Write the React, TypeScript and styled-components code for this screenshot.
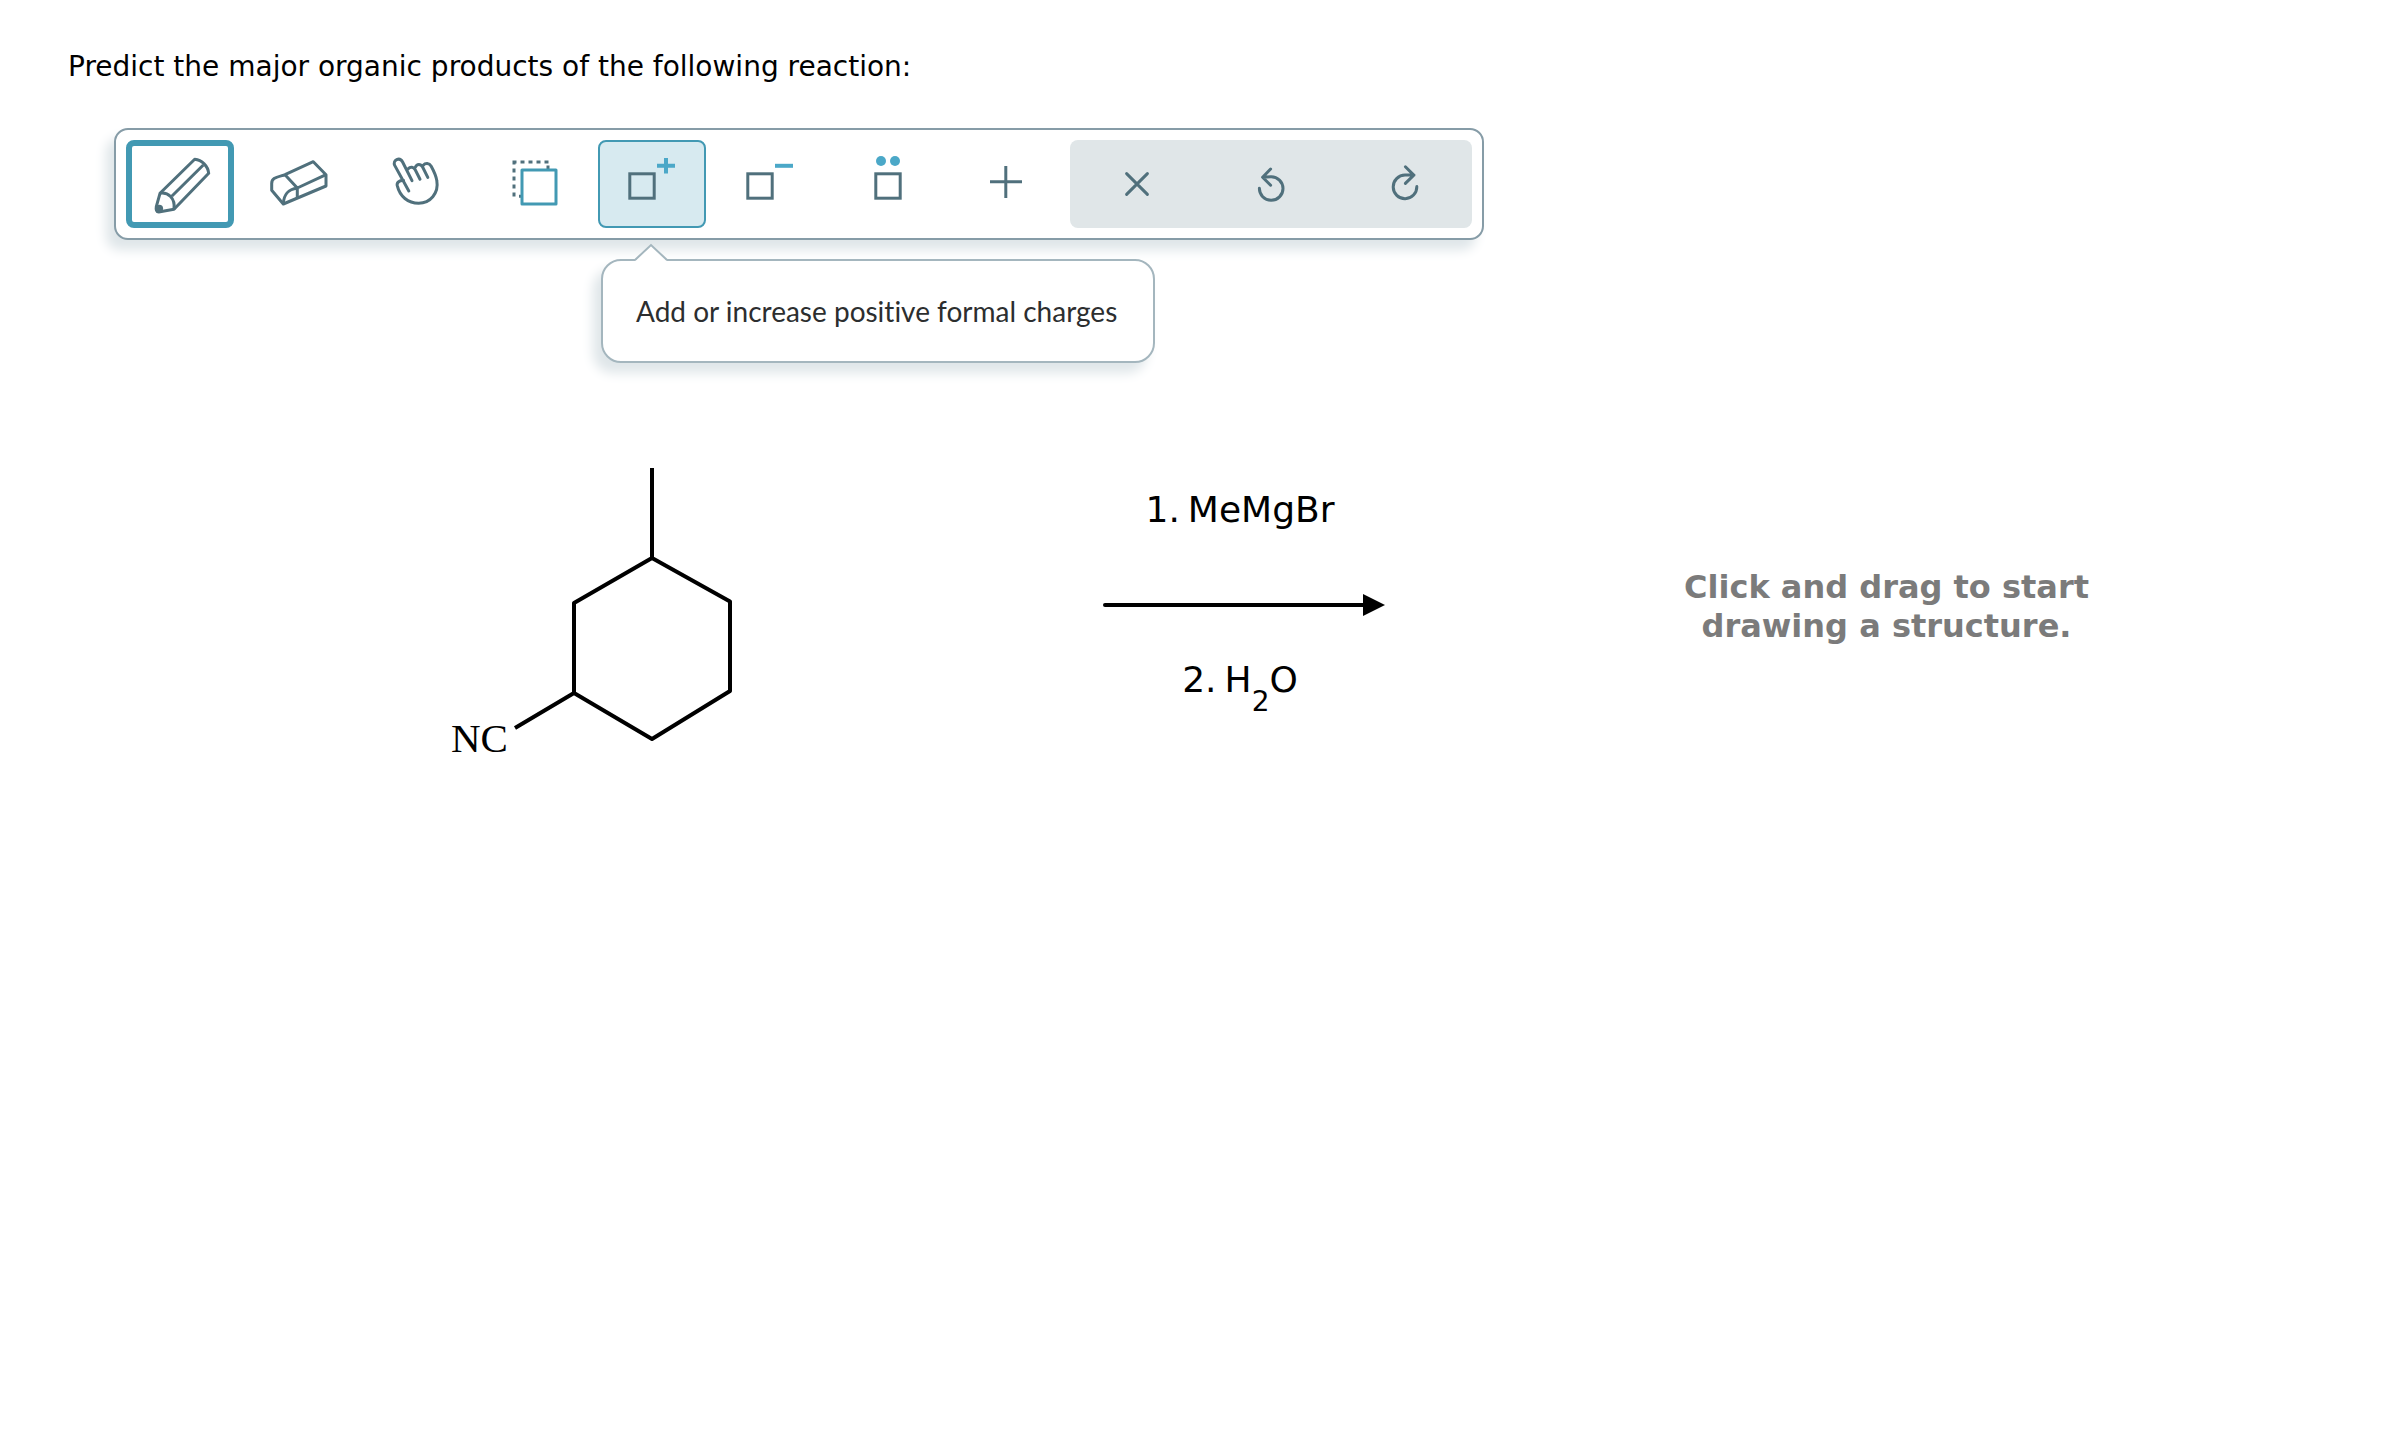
import React from "react";
import styled, { createGlobalStyle } from "styled-components";

const INK = "#50707c";
const TEAL = "#4299b3";
const SKY = "#4ba8c8";

const GlobalStyle = createGlobalStyle`
  *, *::before, *::after { box-sizing: border-box; }
  body {
    margin: 0;
    background: #fff;
    color: #000;
    font-family: Verdana, "DejaVu Sans", sans-serif;
  }
`;

const Page = styled.main`
  padding: 49px 0;
`;

const Prompt = styled.h1`
  margin: 0 68px 43px;
  font-size: 28px;
  line-height: 36px;
  font-weight: 400;
`;

const Toolbar = styled.div`
  display: flex;
  gap: 10px;
  width: fit-content;
  margin-left: 114px;
  padding: 10px;
  border: 2px solid #869ca7;
  border-radius: 14px;
  background: #fff;
  box-shadow: -8px 10px 12px #dfe6e9;
`;

const ToolSlot = styled.div`
  position: relative;
`;

type ToolState = "idle" | "selected" | "hovered";

const ToolButton = styled.button<{ $state: ToolState }>`
  display: flex;
  align-items: center;
  justify-content: center;
  width: 108px;
  height: 88px;
  padding: 0;
  border-radius: 8px;
  border: ${(p) =>
    p.$state === "selected"
      ? `6px solid ${TEAL}`
      : p.$state === "hovered"
        ? `2px solid ${TEAL}`
        : "0"};
  background: ${(p) => (p.$state === "hovered" ? "#d7eaf0" : "#fff")};
`;

const HistoryGroup = styled.div`
  display: flex;
  border-radius: 8px;
  background: #e0e6e8;
`;

const HistoryButton = styled.button`
  display: flex;
  align-items: center;
  justify-content: center;
  width: 134px;
  height: 88px;
  padding: 0;
  border: 0;
  background: transparent;
`;

const Icon = styled.svg`
  display: block;
  flex: none;
  width: 64px;
  height: 64px;
  fill: none;
  stroke: ${INK};
  stroke-width: 3;
  stroke-linejoin: round;
`;

const Tooltip = styled.div`
  position: absolute;
  z-index: 1;
  top: 119px;
  left: 3px;
  padding: 32px 36px 32px 33px;
  border: 2px solid #a4b6be;
  border-radius: 20px;
  background: #fff;
  box-shadow: -8px 10px 12px #dfe6e9;
  color: #2c2e2f;
  font-family: "Proxima Nova", Lato, sans-serif;
  font-size: 28px;
  font-variant-ligatures: none;
  line-height: 36px;
  white-space: nowrap;
`;

const TooltipArrow = styled.svg`
  position: absolute;
  top: -18px;
  left: 31px;
  width: 34px;
  height: 18px;
`;

const Reaction = styled.section`
  display: grid;
  grid-template-columns: 646fr 660fr 625fr;
  justify-items: center;
  align-items: start;
  margin: 228px 183px 0 268px;
`;

const Molecule = styled.svg`
  display: block;
  width: 280px;
  height: 290px;
  overflow: visible;
  fill: none;
  stroke: #000;
  stroke-width: 4;

  text {
    fill: #000;
    stroke: none;
    font-family: "Times New Roman", "Liberation Serif", serif;
    font-size: 41px;
  }
`;

const Conditions = styled.div`
  display: flex;
  flex-direction: column;
  align-items: center;
  padding-top: 20px;
  font-size: 36px;
  line-height: 44px;
`;

const Reagent = styled.div`
  display: flex;
  gap: 8px;
  padding-right: 8px;
`;

const Sub = styled.sub`
  font-size: 28px;
  line-height: 0;
  vertical-align: -19px;
`;

const Arrow = styled.svg`
  display: block;
  width: 282px;
  height: 24px;
  margin: 61px 0 41px;
`;

const DrawingHint = styled.p`
  margin: 0;
  padding-top: 100px;
  color: #7b7b7b;
  font-size: 32px;
  line-height: 39px;
  font-weight: 700;
  text-align: center;
`;

const PencilIcon = () => (
  <Icon viewBox="0 0 64 64" aria-hidden="true">
    <path d="M12 41.3 46.7 7.3C54 8 60 14 60.7 21.3L26 57.3 10.7 60C8.5 60 7.8 57.5 8.3 54.7Z" />
    <path d="M12 41.3C20 40 27.5 46 26 57.3M24 44 55.3 13" />
    <circle cx="11.3" cy="56.6" r="3.8" fill={INK} stroke="none" />
  </Icon>
);

const EraserIcon = () => (
  <Icon viewBox="0 0 64 64" aria-hidden="true">
    <path d="M19 22.7 47.3 9.7 60 22.7V34L17.3 52 5.7 38.3V31.5C5.7 26 9.5 25.6 19 22.7Z" />
    <path d="M19 22.7 31.3 36 60 22.7M31.3 36V46M31.3 36C22 37.5 17.8 42 17.3 52" />
  </Icon>
);

const HandIcon = () => (
  <Icon viewBox="0 0 64 64" strokeLinecap="round" aria-hidden="true">
    <path d="M28 28.7 18.6 10C15.6 4.6 8.4 8 10.7 13.4L24.8 39" />
    <path d="M19.6 28.6C15.6 28.2 12.6 30.4 13.2 33.4C15.8 44.5 24 51.3 34.7 51.3C46 51.3 55 41.5 52.8 28.6C52 23 49.6 18.6 47.2 14.2C45.2 10.8 41.4 10.8 39 13.4" />
    <path d="M24.2 16.8C26.4 14.2 29.6 14.8 31.2 17.8L36 27.2M31.2 15.4C33 11.4 36.6 11.6 38.6 15L43.8 25.4" />
  </Icon>
);

const MarqueeIcon = () => (
  <Icon viewBox="0 0 64 64" aria-hidden="true">
    <path d="M10.5 10H48M12 8.5V46M46 13.5V18M17 44.3H20" strokeDasharray="4 4" />
    <rect x="20" y="18" width="34" height="34" fill="#fff" stroke={TEAL} />
  </Icon>
);

const ChargeSquare = styled.rect.attrs({ y: 21.8, width: 24.4, height: 24.4 })`
  stroke-linejoin: miter;
`;

const PositiveChargeIcon = () => (
  <Icon viewBox="0 0 64 64" aria-hidden="true">
    <ChargeSquare x="9.8" />
    <path d="M37 13.8H55M46 6V21.6" stroke={SKY} strokeWidth="4" />
  </Icon>
);

const NegativeChargeIcon = () => (
  <Icon viewBox="0 0 64 64" aria-hidden="true">
    <ChargeSquare x="9.8" />
    <path d="M37 13.8H55" stroke={SKY} strokeWidth="4" />
  </Icon>
);

const LonePairIcon = () => (
  <Icon viewBox="0 0 64 64" aria-hidden="true">
    <ChargeSquare x="19.8" />
    <circle cx="25" cy="9" r="5" fill={SKY} stroke="none" />
    <circle cx="39" cy="9" r="5" fill={SKY} stroke="none" />
  </Icon>
);

const PlusIcon = () => (
  <Icon viewBox="0 0 64 64" aria-hidden="true">
    <path d="M16 29.8H48M31.8 14V46" />
  </Icon>
);

const ClearIcon = () => (
  <Icon viewBox="0 0 64 64" strokeLinecap="round" aria-hidden="true">
    <path d="M21.6 21.6 42.4 42.4M42.4 21.6 21.6 42.4" />
  </Icon>
);

const UndoIcon = () => (
  <Icon viewBox="0 0 64 64" strokeLinecap="round" aria-hidden="true">
    <path d="M20.4 36.2A11.8 11.8 0 1 0 32 24.7L23.6 25.2M31.6 17 23.6 25.2 31.6 33.2" />
  </Icon>
);

const RedoIcon = () => (
  <Icon viewBox="0 0 64 64" strokeLinecap="round" aria-hidden="true">
    <path d="M43.8 34.6A11.8 11.8 0 1 1 32 23.1H41M32.4 14.8 40.8 23.1 32.4 31.4" />
  </Icon>
);

const tools: { label: string; icon: React.FC; state: ToolState; hint?: string }[] = [
  { label: "Draw", icon: PencilIcon, state: "selected" },
  { label: "Erase", icon: EraserIcon, state: "idle" },
  { label: "Move", icon: HandIcon, state: "idle" },
  { label: "Select area", icon: MarqueeIcon, state: "idle" },
  {
    label: "Positive charge",
    icon: PositiveChargeIcon,
    state: "hovered",
    hint: "Add or increase positive formal charges",
  },
  { label: "Negative charge", icon: NegativeChargeIcon, state: "idle" },
  { label: "Lone pair", icon: LonePairIcon, state: "idle" },
  { label: "Add", icon: PlusIcon, state: "idle" },
];

const history: { label: string; icon: React.FC }[] = [
  { label: "Clear", icon: ClearIcon },
  { label: "Undo", icon: UndoIcon },
  { label: "Redo", icon: RedoIcon },
];

export default function App() {
  return (
    <>
      <GlobalStyle />
      <Page>
        <Prompt>Predict the major organic products of the following reaction:</Prompt>

        <Toolbar role="toolbar" aria-label="Drawing tools">
          {tools.map(({ label, icon: Glyph, state, hint }) => (
            <ToolSlot key={label}>
              <ToolButton
                type="button"
                aria-label={label}
                aria-pressed={state === "selected"}
                $state={state}
              >
                <Glyph />
              </ToolButton>
              {hint && (
                <Tooltip role="tooltip">
                  <TooltipArrow viewBox="0 0 34 18" aria-hidden="true">
                    <path d="M1 18 17 2 33 18Z" fill="#fff" />
                    <path d="M1 17 17 2 33 17" fill="none" stroke="#a4b6be" strokeWidth="2" />
                  </TooltipArrow>
                  {hint}
                </Tooltip>
              )}
            </ToolSlot>
          ))}
          <HistoryGroup>
            {history.map(({ label, icon: Glyph }) => (
              <HistoryButton key={label} type="button" aria-label={label}>
                <Glyph />
              </HistoryButton>
            ))}
          </HistoryGroup>
        </Toolbar>

        <Reaction>
          <Molecule viewBox="0 0 280 290" role="img" aria-label="3-methylcyclohexane carbonitrile">
            <path
              d="M201 0V90M201 90 279 133.500V223L201 271 123 225V135L201 90M123 225 64 260"
              strokeLinejoin="round"
            />
            <text x="0" y="284">NC</text>
          </Molecule>

          <Conditions>
            <Reagent>
              <span>1.</span>
              <span>MeMgBr</span>
            </Reagent>
            <Arrow viewBox="0 0 282 24" aria-hidden="true">
              <path d="M2 12H262" stroke="#000" strokeWidth="4" strokeLinecap="round" />
              <path d="M260 1 282 12 260 23Z" />
            </Arrow>
            <Reagent>
              <span>2.</span>
              <span>
                H<Sub>2</Sub>O
              </span>
            </Reagent>
          </Conditions>

          <DrawingHint>
            Click and drag to start
            <br />
            drawing a structure.
          </DrawingHint>
        </Reaction>
      </Page>
    </>
  );
}
